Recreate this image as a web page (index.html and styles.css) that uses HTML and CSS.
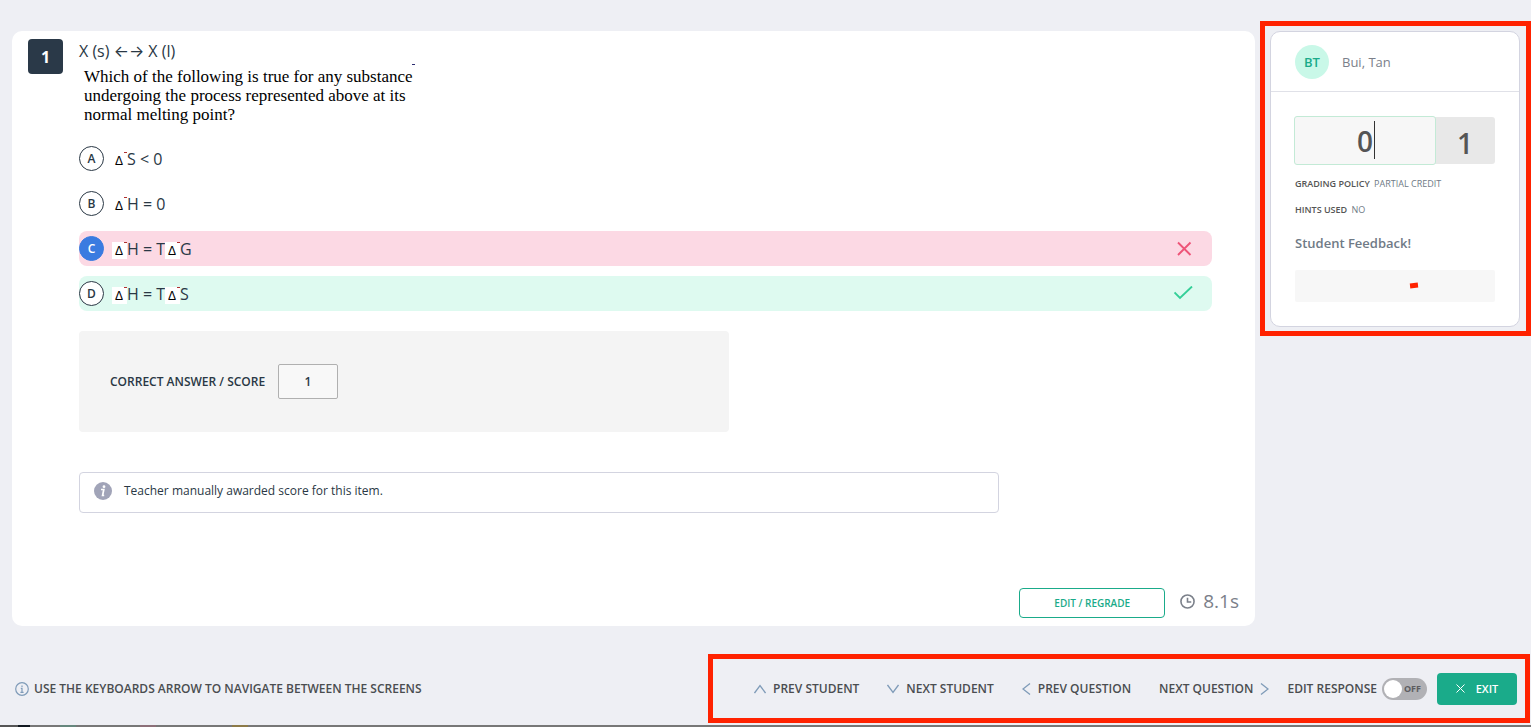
FILE: index.html
```html
<!DOCTYPE html>
<html lang="en">
<head>
    <meta charset="UTF-8">
    <meta name="viewport" content="width=device-width, initial-scale=1.0">
    <title>Grading</title>
    <link rel="stylesheet" href="styles.css">
</head>
<body>
    <main class="main">
        <!-- Question -->
        <section class="card question">
            <div class="number">1</div>
            <div class="content">
                <p class="equation">X (s) <span class="arrows">←→</span> X (l)</p>
                <p class="passage">Which of the following is true for any substance<br>undergoing the process represented above at its<br>normal melting point?</p>

                <div class="options">
                    <label class="option">
                        <input type="radio" name="answer" disabled>
                        <span class="letter">A</span>
                        <span class="answer"><span class="delta">Δ</span>S &lt; 0</span>
                    </label>
                    <label class="option">
                        <input type="radio" name="answer" disabled>
                        <span class="letter">B</span>
                        <span class="answer"><span class="delta">Δ</span>H = 0</span>
                    </label>
                    <label class="option wrong">
                        <input type="radio" name="answer" checked disabled>
                        <span class="letter">C</span>
                        <span class="answer"><span class="delta">Δ</span>H = T<span class="delta">Δ</span>G</span>
                        <svg class="mark" width="20" height="16" viewBox="0 0 20 16"><path d="M4 1.500l12.500 12.500M16.500 1.500L4 14" fill="none" stroke="#ee5478" stroke-width="1.900"/></svg>
                    </label>
                    <label class="option right">
                        <input type="radio" name="answer" disabled>
                        <span class="letter">D</span>
                        <span class="answer"><span class="delta">Δ</span>H = T<span class="delta">Δ</span>S</span>
                        <svg class="mark" width="20" height="16" viewBox="0 0 20 16"><path d="M.5 6.500l5.500 5.500L18 .5" fill="none" stroke="#34cf98" stroke-width="1.900"/></svg>
                    </label>
                </div>

                <div class="score-box">
                    <label for="score">CORRECT ANSWER / SCORE</label>
                    <input type="text" id="score" value="1" readonly>
                </div>

                <div class="notice">
                    <svg width="18" height="18" viewBox="0 0 18 18"><circle cx="9" cy="9" r="9" fill="#a1a4b8"/><circle cx="10" cy="4.700" r="1.400" fill="#fff"/><path d="M7 7.500h2.800L8.600 13.500h1.600" fill="none" stroke="#fff" stroke-width="1.700"/></svg>
                    <span>Teacher manually awarded score for this item.</span>
                </div>

                <div class="actions">
                    <button type="button" class="regrade">EDIT / REGRADE</button>
                    <svg width="15" height="15" viewBox="0 0 16 16"><path d="M8 1a7 7 0 1 0 0 14A7 7 0 0 0 8 1zM8 4v4.500h4" fill="none" stroke="#7b808a" stroke-width="1.700"/></svg>
                    <span class="time">8.1s</span>
                </div>
            </div>
        </section>

        <!-- Student panel -->
        <aside class="highlight panel">
            <div class="card student">
                <div class="student-head">
                    <span class="avatar">BT</span>
                    <span>Bui, Tan</span>
                </div>
                <div class="student-body">
                    <div class="grade">
                        <div class="grade-field">
                            <input type="text" id="grade" value="0" aria-label="Score">
                            <span class="caret"></span>
                        </div>
                        <span class="max">1</span>
                    </div>
                    <p class="meta"><b>GRADING POLICY</b> PARTIAL CREDIT</p>
                    <p class="meta"><b>HINTS USED</b> NO</p>
                    <label class="feedback-label" for="feedback">Student Feedback!</label>
                    <div class="feedback-field">
                        <textarea id="feedback" rows="1"></textarea>
                        <span class="speck"></span>
                    </div>
                </div>
            </div>
        </aside>
    </main>

    <!-- Bottom bar -->
    <footer class="footer">
        <div class="hint">
            <svg width="14" height="14" viewBox="0 0 14 14"><circle cx="7" cy="7" r="6.300" fill="none" stroke="#7f9bb8" stroke-width="1.200"/><path d="M7 3.500v1.500M5.800 6.300h1.200v4M5.400 10.400h3.200" fill="none" stroke="#7f9bb8" stroke-width="1.200"/></svg>
            <span>USE THE KEYBOARDS ARROW TO NAVIGATE BETWEEN THE SCREENS</span>
        </div>
        <div class="highlight controls">
            <nav class="nav">
                <button type="button"><svg width="12" height="10" viewBox="0 0 12 10"><path d="M.5 9L6 1.500 11.500 9"/></svg>PREV STUDENT</button>
                <button type="button"><svg width="12" height="10" viewBox="0 0 12 10"><path d="M.5 1L6 8.500 11.500 1"/></svg>NEXT STUDENT</button>
                <button type="button"><svg width="9" height="12" viewBox="0 0 9 12"><path d="M8 .5L1 6l7 5.500"/></svg>PREV QUESTION</button>
                <button type="button">NEXT QUESTION<svg width="9" height="12" viewBox="0 0 9 12"><path d="M1 .5L8 6l-7 5.500"/></svg></button>
            </nav>
            <label class="toggle">
                EDIT RESPONSE
                <input type="checkbox">
                <span class="switch">OFF</span>
            </label>
            <button type="button" class="exit"><svg width="9" height="9" viewBox="0 0 9 9"><path d="M.5 .5l8 8M8.500 .5l-8 8" fill="none" stroke="#fff"/></svg>EXIT</button>
        </div>
    </footer>
    <div class="strip"></div>
</body>
</html>
```

FILE: styles.css
```css
* {
    box-sizing: border-box;
}
body {
    margin: 0;
    min-height: 100vh;
    display: flex;
    flex-direction: column;
    background-color: #eeeff4;
    color: #2a3845;
    font-family: "Open Sans", sans-serif;
}
p {
    margin: 0;
}
button, input, textarea {
    font-family: inherit;
    color: inherit;
}
button {
    cursor: pointer;
}
.main {
    display: flex;
    align-items: flex-start;
    gap: 5px;
    padding: 21px 0 20px 12px;
}
.card {
    background-color: #fff;
    border-radius: 10px;
}
.highlight {
    border: 5px solid #ff2200;
}

/* Question */
.question {
    flex: 1;
    display: flex;
    gap: 16px;
    margin-top: 10px;
    padding: 8px 16px;
}
.number {
    width: 35px;
    height: 35px;
    border-radius: 4px;
    background-color: #2a3948;
    color: #fff;
    font-size: 16px;
    font-weight: 700;
    line-height: 36px;
    text-align: center;
}
.content {
    flex: 1;
}
.equation {
    font-size: 16px;
    line-height: 24px;
}
.arrows {
    font-family: Inter, sans-serif;
}
.passage {
    position: relative;
    width: 336px;
    padding: 4px 0 4px 5px;
    color: #000;
    font-family: "Liberation Serif", serif;
    font-size: 17px;
    line-height: 19px;
    white-space: nowrap;
}
.passage::after {
    content: "";
    position: absolute;
    top: 1px;
    right: 0;
    width: 3px;
    height: 1px;
    background-color: #2c2c70;
}
.options {
    display: flex;
    flex-direction: column;
    gap: 10px;
    margin: 13px 27px 20px 0;
}
.option {
    position: relative;
    display: flex;
    align-items: center;
    gap: 8px;
    height: 35px;
    padding-right: 18px;
    border-radius: 8px;
    font-size: 16px;
}
.option input, .toggle input {
    position: absolute;
    opacity: 0;
}
.letter {
    width: 25px;
    height: 25px;
    border: 1px solid #2a3845;
    border-radius: 50%;
    background-color: #fff;
    font-size: 12px;
    font-weight: 600;
    line-height: 23px;
    text-align: center;
}
.option input:checked + .letter {
    border-color: #3a7be0;
    background-color: #3a7be0;
    color: #fff;
}
.answer {
    display: flex;
    align-items: center;
    white-space: pre;
}
.delta {
    position: relative;
    width: 15px;
    height: 17px;
    margin-top: 3px;
    padding-left: 3px;
    background-color: #fff;
    color: #000;
    font-family: "Liberation Sans", sans-serif;
    font-size: 12px;
    line-height: 19px;
}
.delta::after {
    content: "";
    position: absolute;
    top: 0;
    right: 0;
    width: 3px;
    height: 1px;
    background-color: #b03030;
}
.mark {
    margin-left: auto;
}
.wrong {
    background-color: #fcd9e4;
}
.right {
    background-color: #defaf0;
}
.score-box {
    display: flex;
    align-items: center;
    gap: 8px;
    max-width: 650px;
    height: 101px;
    padding-left: 31px;
    border-radius: 4px;
    background-color: #f4f4f4;
    font-size: 12px;
    font-weight: 600;
}
.score-box label {
    min-width: 160px;
}
.score-box input {
    width: 60px;
    height: 35px;
    border: 1px solid #b0b0b0;
    border-radius: 2px;
    background-color: #f8f8f8;
    font-size: 12px;
    font-weight: 600;
    text-align: center;
}
.notice {
    display: flex;
    align-items: center;
    gap: 12px;
    max-width: 920px;
    height: 41px;
    margin-top: 40px;
    padding: 0 14px 4px;
    border: 1px solid #d3d4e0;
    border-radius: 4px;
    font-size: 12px;
}
.actions {
    display: flex;
    align-items: center;
    justify-content: flex-end;
    margin-top: 75px;
    color: #7b808a;
}
.regrade {
    width: 146px;
    height: 30px;
    margin-right: 15px;
    border: 1px solid #1aab8a;
    border-radius: 4px;
    background-color: #fff;
    color: #1aab8a;
    font-size: 10px;
    font-weight: 600;
}
.actions svg, .time {
    margin-bottom: 4px;
}
.time {
    margin-left: 8px;
    font-size: 19px;
    line-height: 26px;
}

/* Student panel */
.panel {
    width: 271px;
    padding: 5px 6px 4px 5px;
}
.student {
    border: 1px solid #d3d4e0;
}
.student-head {
    display: flex;
    align-items: center;
    gap: 13px;
    height: 60px;
    padding: 0 24px;
    border-bottom: 1px solid #e0e1e8;
    color: #7b808a;
    font-size: 13px;
}
.avatar {
    width: 34px;
    height: 34px;
    border-radius: 50%;
    background-color: #c9f8e8;
    color: #1aab8a;
    font-weight: 600;
    line-height: 34px;
    text-align: center;
}
.student-body {
    padding: 24px;
    color: #555;
}
.grade {
    display: flex;
    align-items: center;
    margin-bottom: 12px;
    font-size: 28px;
    font-weight: 600;
}
.grade-field, .feedback-field {
    position: relative;
    flex: 1;
}
.grade-field {
    margin: 0 -1px;
}
.grade-field input {
    display: block;
    width: 100%;
    height: 49px;
    border: 1px solid #c3ead6;
    border-radius: 3px;
    background-color: #f7f7f7;
    font-size: 28px;
    font-weight: 600;
    text-align: center;
}
.caret {
    position: absolute;
    top: 5px;
    left: 56%;
    width: 1px;
    height: 38px;
    background-color: #333;
}
.max {
    width: 60px;
    height: 47px;
    border-radius: 0 3px 3px 0;
    background-color: #e8e8e8;
    line-height: 52px;
    text-align: center;
}
.meta {
    margin-bottom: 12px;
    color: #6f7a86;
    font-size: 9px;
    line-height: 14px;
}
.meta b {
    margin-right: 2px;
    color: #555;
    font-weight: 600;
}
.feedback-label {
    display: block;
    padding-top: 4px;
    color: #6f7a86;
    font-size: 13px;
    font-weight: 600;
    line-height: 20px;
}
.feedback-field textarea {
    display: block;
    width: 100%;
    height: 32px;
    margin-top: 17px;
    border: 0;
    border-radius: 2px;
    background-color: #f7f7f7;
    resize: none;
}
.speck {
    position: absolute;
    top: 13px;
    left: 115px;
    width: 8px;
    height: 5px;
    background-color: #ff2200;
    transform: rotate(-6deg);
}

/* Bottom bar */
.footer {
    display: flex;
    align-items: center;
    justify-content: space-between;
    margin-top: auto;
    padding: 0 1px 2px 15px;
    color: #4a4d50;
    font-size: 12px;
    font-weight: 600;
}
.hint {
    display: flex;
    align-items: center;
    gap: 5px;
}
.controls {
    display: flex;
    align-items: center;
    justify-content: flex-end;
    gap: 10px;
    width: 822px;
    height: 69px;
    padding-right: 8px;
}
.nav {
    display: flex;
    gap: 28px;
    margin-right: 8px;
}
.nav button {
    display: flex;
    align-items: center;
    gap: 7px;
    padding: 0;
    border: 0;
    background: none;
    font-size: 12px;
    font-weight: 600;
}
.nav path {
    fill: none;
    stroke: #7f9bb8;
    stroke-width: 1.3;
}
.toggle {
    position: relative;
    display: flex;
    align-items: center;
    gap: 5px;
}
.switch {
    position: relative;
    width: 45px;
    height: 22px;
    padding-right: 6px;
    border-radius: 11px;
    background-color: #b1b1b5;
    color: #5c5c60;
    font-size: 9px;
    font-weight: 700;
    line-height: 22px;
    text-align: right;
}
.switch::before {
    content: "";
    position: absolute;
    top: 2px;
    left: 2px;
    width: 18px;
    height: 18px;
    border-radius: 50%;
    background-color: #fff;
}
.exit {
    display: flex;
    align-items: center;
    justify-content: center;
    gap: 11px;
    width: 80px;
    height: 32px;
    border: 0;
    border-radius: 4px;
    background-color: #1aab8a;
    color: #fff;
    font-size: 11px;
    font-weight: 600;
}
.strip {
    height: 2px;
    background: linear-gradient(90deg, #555 0 18px, #111820 18px 30px, #777 30px 60px, #66877d 60px 76px, #777 76px 140px, #8c6f78 140px 156px, #777 156px 232px, #8c7a48 232px 248px, #777 248px);
}
```
